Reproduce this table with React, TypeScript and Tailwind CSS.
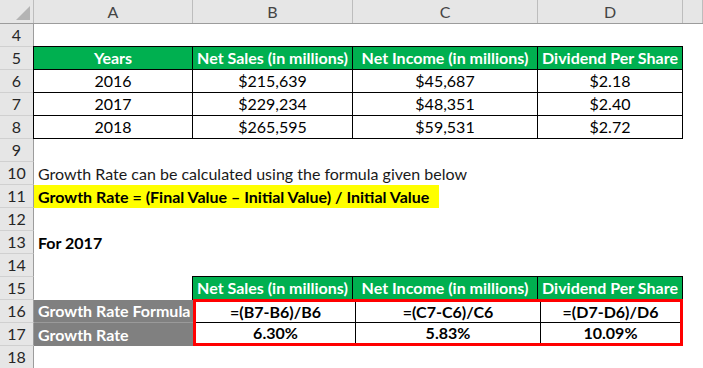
import React from 'react';

const COLS = 'grid grid-cols-[34px_159px_160px_185px_145px_1fr]';

const RowNum: React.FC<{ n: number }> = ({ n }) => (
  <div className="flex items-center justify-center border-r border-b border-r-[#9c9c9c] border-b-[#d0d0d0] bg-[#e6e6e6] text-[#262626]">
    {n}
  </div>
);

const green = 'flex items-center justify-center bg-[#00b050] font-bold text-white border border-black -ml-px -mt-px';
const plain = 'flex items-center justify-center border border-black -ml-px -mt-px';

export default function App() {
  const data = [
    { n: 6, y: '2016', s: '$215,639', i: '$45,687', d: '$2.18' },
    { n: 7, y: '2017', s: '$229,234', i: '$48,351', d: '$2.40' },
    { n: 8, y: '2018', s: '$265,595', i: '$59,531', d: '$2.72' },
  ];

  return (
    <div className="h-[368px] w-[703px] overflow-hidden bg-white font-['Lato',sans-serif] text-[16px] leading-none text-black">
      {/* column headers */}
      <div className={`${COLS} h-[24px] border-b border-[#9c9c9c] bg-[#e6e6e6] text-[#444]`}>
        <div className="relative border-r border-[#bdbdbd]">
          <svg className="absolute right-[3px] bottom-[3px]" width="14" height="14" viewBox="0 0 14 14">
            <polygon points="14,0 14,14 0,14" fill="#b4b4b4" />
          </svg>
        </div>
        {['A', 'B', 'C', 'D', ''].map((c, i) => (
          <div key={i} className="flex items-center justify-center border-r border-[#bdbdbd]">
            {c}
          </div>
        ))}
      </div>

      {/* row 4 */}
      <div className={`${COLS} h-[23px]`}>
        <RowNum n={4} />
      </div>

      {/* row 5 */}
      <div className={`${COLS} h-[23px]`}>
        <RowNum n={5} />
        <div className={green}>Years</div>
        <div className={green}>Net Sales (in millions)</div>
        <div className={green}>Net Income (in millions)</div>
        <div className={green}>Dividend Per Share</div>
      </div>

      {data.map((r) => (
        <div key={r.n} className={`${COLS} h-[23px]`}>
          <RowNum n={r.n} />
          <div className={plain}>{r.y}</div>
          <div className={plain}>{r.s}</div>
          <div className={plain}>{r.i}</div>
          <div className={plain}>{r.d}</div>
        </div>
      ))}

      <div className={`${COLS} h-[23px]`}>
        <RowNum n={9} />
      </div>

      <div className={`${COLS} h-[23px]`}>
        <RowNum n={10} />
        <div className="flex items-center whitespace-nowrap pl-[4px] text-[#1a1a1a]">
          Growth Rate can be calculated using the formula given below
        </div>
      </div>

      <div className={`${COLS} h-[23px]`}>
        <RowNum n={11} />
        <div className="flex items-center whitespace-nowrap">
          <div className="flex h-full w-[405px] shrink-0 items-center bg-[#ffff00] pl-[4px] font-bold">
            Growth Rate = (Final Value – Initial Value) / Initial Value
          </div>
        </div>
      </div>

      <div className={`${COLS} h-[23px]`}>
        <RowNum n={12} />
      </div>

      <div className={`${COLS} h-[23px]`}>
        <RowNum n={13} />
        <div className="flex items-center pl-[4px] font-bold">For 2017</div>
      </div>

      <div className={`${COLS} h-[23px]`}>
        <RowNum n={14} />
      </div>

      <div className={`${COLS} h-[23px]`}>
        <RowNum n={15} />
        <div />
        <div className={green}>Net Sales (in millions)</div>
        <div className={green}>Net Income (in millions)</div>
        <div className={green}>Dividend Per Share</div>
      </div>

      <div className={`${COLS} h-[46px]`}>
        <div className="grid grid-rows-2">
          <RowNum n={16} />
          <RowNum n={17} />
        </div>
        <div className="grid grid-rows-2 bg-[#808080] font-bold text-white">
          <div className="flex items-center border-b border-[#9a9a9a] pl-[4px]">Growth Rate Formula</div>
          <div className="flex items-center pl-[4px]">Growth Rate</div>
        </div>
        <div className="col-span-3 -mt-px grid grid-cols-[160px_185px_1fr] border-[3px] border-[#ff0000] font-bold">
          <div className="flex items-center justify-center border-r border-b border-black">=(B7-B6)/B6</div>
          <div className="flex items-center justify-center border-r border-b border-black">=(C7-C6)/C6</div>
          <div className="flex items-center justify-center border-b border-black">=(D7-D6)/D6</div>
          <div className="flex items-center justify-center border-r border-black">6.30%</div>
          <div className="flex items-center justify-center border-r border-black">5.83%</div>
          <div className="flex items-center justify-center">10.09%</div>
        </div>
      </div>

      <div className={`${COLS} h-[23px]`}>
        <RowNum n={18} />
      </div>
    </div>
  );
}
